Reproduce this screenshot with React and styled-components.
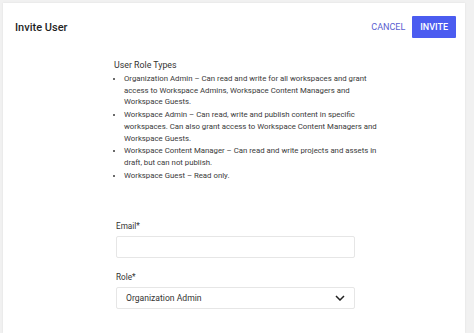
import React from "react";
import styled, {createGlobalStyle} from "styled-components";

const GlobalStyle = createGlobalStyle`
  html, body {
    margin: 0;
    padding: 0;
    background: #f1f1f1;
    font-family: Roboto, "Liberation Sans", sans-serif;
  }
`

const Page = styled.div`
  padding: 3px 9px 0 3px;
  height: 333px;
  box-sizing: border-box;
`

const Card = styled.div`
  background: #fff;
  height: 100%;
  box-shadow: 0 0 2px rgba(0, 0, 0, 0.08);
`

const Header = styled.div`
  display: flex;
  align-items: center;
  padding: 13px 9px 0 12px;
  height: 22px;
`

const Title = styled.h1`
  margin: 0;
  font-size: 11px;
  font-weight: 500;
  color: #1f1f1f;
  flex: 1;
`

const TextButton = styled.button`
  border: none;
  background: ${props => props.primary ? "#4b5cf0" : "transparent"};
  color: ${props => props.primary ? "#fff" : "#5a60d0"};
  font-family: inherit;
  font-size: 9px;
  font-weight: ${props => props.primary ? 500 : 400};
  height: 22px;
  padding: ${props => props.primary ? "0 8px" : "0 7px 0 8px"};
  border-radius: 1px;
`

const Body = styled.div`
  padding: 22px 0 0 111px;
  width: 270px;
`

const RolesTitle = styled.div`
  font-size: 8.8px;
  color: #333;
  margin-bottom: 3px;
`

const RoleList = styled.ul`
  margin: 0;
  padding: 0 0 0 10px;
  font-size: 7.8px;
  line-height: 11.7px;
  color: #3a3a3a;
`

const RoleItem = styled.li`
  margin-bottom: 1px;
`

const Field = styled.div`
  margin-top: ${props => props.first ? "40px" : "14px"};
  width: 239px;
  margin-left: 2px;
`

const Label = styled.div`
  font-size: 8.2px;
  color: #333;
  margin-bottom: 5px;
`

const Input = styled.div`
  height: 20px;
  border: 1px solid #e6e6e6;
  border-radius: 2px;
  display: flex;
  align-items: center;
  justify-content: space-between;
  padding: 0 9px;
  font-size: 8.6px;
  color: #333;
`

const Chevron = () => (
    <svg width="10" height="6" viewBox="0 0 10 6">
        <path d="M1 1 L5 5 L9 1" fill="none" stroke="#222" strokeWidth="1.5"/>
    </svg>
)

const roles = [
    "Organization Admin – Can read and write for all workspaces and grant access to Workspace Admins, Workspace Content Managers and Workspace Guests.",
    "Workspace Admin – Can read, write and publish content in specific workspaces. Can also grant access to Workspace Content Managers and Workspace Guests.",
    "Workspace Content Manager – Can read and write projects and assets in draft, but can not publish.",
    "Workspace Guest – Read only.",
]

const App = () => {
    return (
        <Page>
            <GlobalStyle/>
            <Card>
                <Header>
                    <Title>Invite User</Title>
                    <TextButton>CANCEL</TextButton>
                    <TextButton primary>INVITE</TextButton>
                </Header>
                <Body>
                    <RolesTitle>User Role Types</RolesTitle>
                    <RoleList>
                        {roles.map(r => <RoleItem key={r}>{r}</RoleItem>)}
                    </RoleList>
                    <Field first>
                        <Label>Email*</Label>
                        <Input/>
                    </Field>
                    <Field>
                        <Label>Role*</Label>
                        <Input>
                            <span>Organization Admin</span>
                            <Chevron/>
                        </Input>
                    </Field>
                </Body>
            </Card>
        </Page>
    );
}

export default App;
